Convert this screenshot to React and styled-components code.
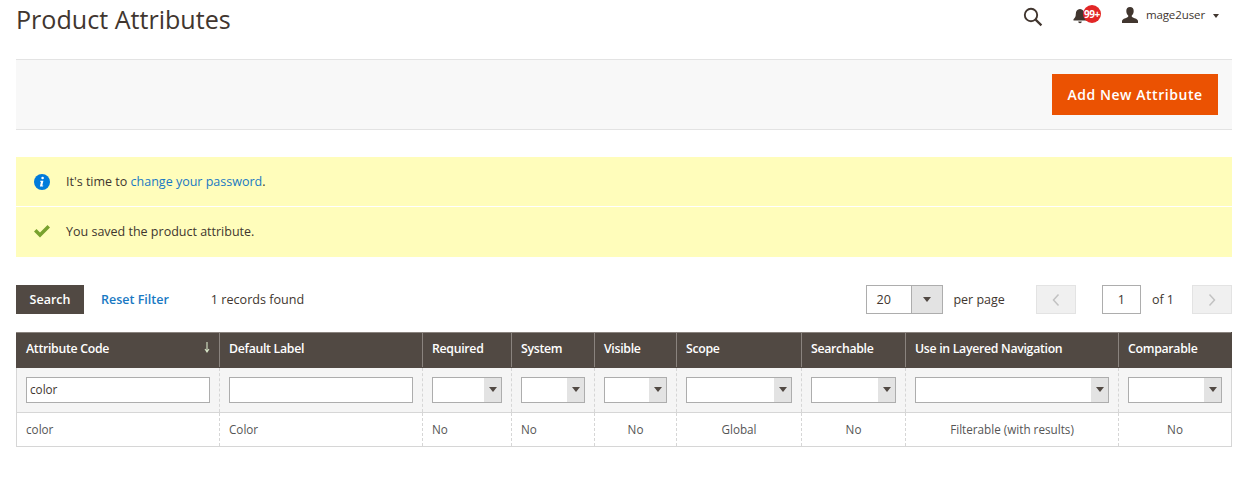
import styled, { createGlobalStyle } from 'styled-components'

const GlobalStyle = createGlobalStyle`
  html, body {
    margin: 0;
    background: #fff;
    font-family: "Open Sans", "Liberation Sans", sans-serif;
    color: #41362f;
  }
`

const Page = styled.div`
  width: 1216px;
  height: 486px;
  margin: 0 17px 0 16px;
`

const TopRow = styled.header`
  display: flex;
  justify-content: space-between;
  height: 59px;
`

const Title = styled.h1`
  margin: 2px 0 0 0;
  font-size: 25.1px;
  line-height: 35px;
  font-weight: 400;
  color: #41362f;
`

const UserArea = styled.div`
  display: flex;
  align-items: flex-start;
  padding: 6px 13px 0 0;
`

const SearchButton = styled.div`
  width: 20px;
  height: 20px;
  margin: 1px 30px 0 0;
`

const Bell = styled.div`
  position: relative;
  width: 14px;
  height: 16px;
  margin: 2px 34px 0 0;
`

const Badge = styled.span`
  position: absolute;
  left: 10px;
  top: -3px;
  width: 18px;
  height: 18px;
  border-radius: 50%;
  background: #e22626;
  color: #fff;
  font-size: 10px;
  font-weight: 700;
  line-height: 18px;
  text-align: center;
  letter-spacing: -0.5px;
`

const UserIcon = styled.span`
  display: flex;
  margin-top: 1px;
`

const UserName = styled.span`
  margin: -1px 0 0 7px;
  font-size: 11.5px;
  line-height: 20px;
  letter-spacing: -0.1px;
  color: #41362f;
`

const Caret = styled.span`
  width: 0;
  height: 0;
  margin: 8px 0 0 8px;
  border-left: 3px solid transparent;
  border-right: 3px solid transparent;
  border-top: 4px solid #41362f;
`

const ActionBar = styled.div`
  display: flex;
  justify-content: flex-end;
  align-items: center;
  box-sizing: border-box;
  height: 71px;
  padding-right: 14px;
  background: #f8f8f8;
  border-top: 1px solid #e3e3e3;
  border-bottom: 1px solid #e3e3e3;
`

const PrimaryButton = styled.button`
  width: 166px;
  height: 41px;
  padding: 0;
  border: 0;
  background: #eb5202;
  color: #fff;
  font-family: inherit;
  font-size: 14px;
  font-weight: 600;
  letter-spacing: 0.55px;
`

const Messages = styled.div`
  margin-top: 27px;
  background: #fffdbb;
`

const Message = styled.div`
  display: flex;
  align-items: center;
  height: 49px;
  padding-left: 17px;
  font-size: 12.5px;
  color: #41362f;

  & + & {
    height: 48px;
    padding-bottom: 2px;
    border-top: 1px solid #fff;
  }

  a {
    color: #1979c3;
    text-decoration: none;
  }
`

const MessageIcon = styled.span`
  display: flex;
  justify-content: center;
  width: 18px;
  margin-right: 15px;
`

const Toolbar = styled.div`
  display: flex;
  align-items: center;
  height: 29px;
  margin-top: 28px;
  font-size: 12.6px;
  color: #41362f;
`

const SearchBtn = styled.button`
  width: 68px;
  height: 29px;
  padding: 0;
  border: 0;
  background: #514943;
  color: #fff;
  font-family: inherit;
  font-size: 12.5px;
  font-weight: 600;
`

const ResetLink = styled.a`
  margin-left: 17px;
  color: #1979c3;
  font-weight: 600;
  font-size: 12.5px;
`

const Records = styled.span`
  margin-left: 42px;
`

const Pager = styled.div`
  display: flex;
  align-items: center;
  margin-left: auto;
`

const PerPage = styled.div`
  display: flex;
  box-sizing: border-box;
  width: 77px;
  height: 29px;
  border: 1px solid #adadad;
  background: #fff;
`

const PerPageValue = styled.span`
  flex: 1;
  padding-left: 9px;
  line-height: 27px;
`

const PerPageArrow = styled.span`
  display: flex;
  align-items: center;
  justify-content: center;
  width: 30px;
  background: #e3e3e3;
  border-left: 1px solid #adadad;
`

const Arrow = styled.span`
  width: 0;
  height: 0;
  border-left: 4px solid transparent;
  border-right: 4px solid transparent;
  border-top: 5px solid #514943;
`

const PerPageLabel = styled.span`
  margin: 0 31px 0 10px;
  font-size: 12.5px;
`

const PageButton = styled.span`
  display: flex;
  align-items: center;
  justify-content: center;
  box-sizing: border-box;
  width: 40px;
  height: 29px;
  background: #f0f0f0;
  border: 1px solid #e3e3e3;
`

const PageInput = styled.span`
  box-sizing: border-box;
  width: 39px;
  height: 29px;
  margin-left: 26px;
  border: 1px solid #adadad;
  text-align: center;
  line-height: 27px;
`

const PageTotal = styled.span`
  margin: 0 18px 0 11px;
  font-size: 12.5px;
`

const Grid = styled.table`
  width: 1215px;
  margin-top: 18px;
  border-collapse: collapse;
  table-layout: fixed;
  font-size: 11.7px;
`

const HeadCell = styled.th`
  position: relative;
  box-sizing: border-box;
  height: 35px;
  padding: 0 9px 3px;
  background: #514943;
  border: 1px solid #8a837e;
  border-bottom-color: #514943;
  color: #fff;
  font-size: 12.3px;
  font-weight: 600;
  letter-spacing: -0.3px;
  text-align: left;
  white-space: nowrap;

  &:first-child {
    border-left-color: #514943;
  }

  &:last-child {
    border-right-color: #514943;
  }
`

const SortMark = styled.span`
  position: absolute;
  right: 9px;
  top: 9px;
  display: flex;
`

const FilterCell = styled.td`
  box-sizing: border-box;
  height: 45px;
  padding: 0 9px 1px;
  background: #f5f5f5;
  border-left: 1px dashed #d6d6d6;
  border-right: 1px dashed #d6d6d6;
  border-bottom: 1px solid #d6d6d6;

  &:first-child {
    border-left: 1px solid #d6d6d6;
  }

  &:last-child {
    border-right: 1px solid #d6d6d6;
  }
`

const TextFilter = styled.div`
  box-sizing: border-box;
  height: 26px;
  padding-left: 3px;
  background: #fff;
  border: 1px solid #adadad;
  font-size: 11.7px;
  line-height: 23px;
  color: #41362f;
`

const SelectFilter = styled.div`
  display: flex;
  justify-content: flex-end;
  box-sizing: border-box;
  height: 26px;
  background: #fff;
  border: 1px solid #adadad;
`

const SelectArrow = styled.span`
  display: flex;
  align-items: center;
  justify-content: center;
  width: 17px;
  background: #e3e3e3;
`

const DataCell = styled.td`
  box-sizing: border-box;
  height: 34px;
  padding: 0 9px 1px;
  border-left: 1px dashed #d6d6d6;
  border-right: 1px dashed #d6d6d6;
  border-bottom: 1px solid #d6d6d6;
  color: #555;
  text-align: ${props => props.$center ? 'center' : 'left'};

  &:first-child {
    border-left: 1px solid #d6d6d6;
  }

  &:last-child {
    border-right: 1px solid #d6d6d6;
  }
`

const columns = [
  { label: 'Attribute Code', width: 203, value: 'color' },
  { label: 'Default Label', width: 203, value: 'Color' },
  { label: 'Required', width: 89, value: 'No', select: true },
  { label: 'System', width: 83, value: 'No', select: true },
  { label: 'Visible', width: 82, value: 'No', select: true, center: true },
  { label: 'Scope', width: 125, value: 'Global', select: true, center: true },
  { label: 'Searchable', width: 104, value: 'No', select: true, center: true },
  { label: 'Use in Layered Navigation', width: 213, value: 'Filterable (with results)', select: true, center: true },
  { label: 'Comparable', width: 113, value: 'No', select: true, center: true },
]

const App = () => {
  return (
    <Page>
      <GlobalStyle />
      <TopRow>
        <Title>Product Attributes</Title>
        <UserArea>
          <SearchButton>
            <svg width="20" height="20" viewBox="0 0 20 20">
              <circle cx="8" cy="8" r="6.2" fill="none" stroke="#41362f" strokeWidth="1.9" />
              <path d="M12.6 12.6 L18.4 18.4" stroke="#41362f" strokeWidth="2.2" />
            </svg>
          </SearchButton>
          <Bell>
            <svg width="14" height="17" viewBox="0 0 14 17">
              <path d="M7 1c2.800 0 4.200 2.200 4.200 5 0 3 1 4 2.300 5.200v1.300H.5v-1.300C1.800 10 2.800 9 2.800 6 2.800 3.200 4.200 1 7 1z" fill="#41362f" />
              <path d="M5.200 13.500h3.600a1.800 1.800 0 0 1-3.600 0z" fill="#41362f" />
            </svg>
            <Badge>99+</Badge>
          </Bell>
          <UserIcon>
            <svg width="18" height="17" viewBox="0 0 18 17">
              <path d="M9 0c2.400 0 3.700 1.700 3.700 3.900 0 1.900-.9 3.700-1.900 4.700-.3.900.1 1.500 1.100 1.900 2.300.9 4.600 1.700 5.100 3.200V16H1v-2.300c.5-1.500 2.800-2.300 5.100-3.200 1-.4 1.400-1 1.100-1.900-1-1-1.900-2.800-1.900-4.700C5.300 1.700 6.600 0 9 0z" fill="#41362f" />
            </svg>
          </UserIcon>
          <UserName>mage2user</UserName>
          <Caret />
        </UserArea>
      </TopRow>
      <ActionBar>
        <PrimaryButton>Add New Attribute</PrimaryButton>
      </ActionBar>
      <Messages>
        <Message>
          <MessageIcon>
            <svg width="16" height="16" viewBox="0 0 16 16">
              <circle cx="8" cy="8" r="8" fill="#007bdb" />
              <circle cx="8.600" cy="4" r="1.300" fill="#fff" />
              <path d="M6.300 6.800h3.100l-1.100 4.600h1l-.3 1.100H5.900l1.100-4.700H6z" fill="#fff" />
            </svg>
          </MessageIcon>
          <span>It's time to <a href="#">change your password</a>.</span>
        </Message>
        <Message>
          <MessageIcon>
            <svg width="18" height="14" viewBox="0 0 18 14">
              <path d="M1 7.500 L3.500 5 L7 8.500 L14.500 1 L17 3.500 L7 13.500 z" fill="#79a22e" />
            </svg>
          </MessageIcon>
          <span>You saved the product attribute.</span>
        </Message>
      </Messages>
      <Toolbar>
        <SearchBtn>Search</SearchBtn>
        <ResetLink>Reset Filter</ResetLink>
        <Records>1 records found</Records>
        <Pager>
          <PerPage>
            <PerPageValue>20</PerPageValue>
            <PerPageArrow><Arrow /></PerPageArrow>
          </PerPage>
          <PerPageLabel>per page</PerPageLabel>
          <PageButton>
            <svg width="8" height="14" viewBox="0 0 8 14">
              <path d="M6.500 1.500 L1.500 7 L6.500 12.500" fill="none" stroke="#c2c2c2" strokeWidth="1.500" />
            </svg>
          </PageButton>
          <PageInput>1</PageInput>
          <PageTotal>of 1</PageTotal>
          <PageButton>
            <svg width="8" height="14" viewBox="0 0 8 14">
              <path d="M1.500 1.500 L6.500 7 L1.500 12.500" fill="none" stroke="#c2c2c2" strokeWidth="1.500" />
            </svg>
          </PageButton>
        </Pager>
      </Toolbar>
      <Grid>
        <colgroup>
          {columns.map(c => <col key={c.label} width={c.width} />)}
        </colgroup>
        <thead>
          <tr>
            {columns.map((c, i) => (
              <HeadCell key={c.label}>
                {c.label}
                {i === 0 &&
                  <SortMark>
                    <svg width="6" height="11" viewBox="0 0 6 11">
                      <path d="M3 0v9M1 7l2 3 2-3" fill="none" stroke="#d8e6c8" strokeWidth="1.100" />
                    </svg>
                  </SortMark>}
              </HeadCell>
            ))}
          </tr>
        </thead>
        <tbody>
          <tr>
            {columns.map(c => (
              <FilterCell key={c.label}>
                {c.select
                  ? <SelectFilter><SelectArrow><Arrow /></SelectArrow></SelectFilter>
                  : <TextFilter>{c.label === 'Attribute Code' ? 'color' : ''}</TextFilter>}
              </FilterCell>
            ))}
          </tr>
          <tr>
            {columns.map(c => (
              <DataCell key={c.label} $center={c.center}>{c.value}</DataCell>
            ))}
          </tr>
        </tbody>
      </Grid>
    </Page>
  )
}

export default App
